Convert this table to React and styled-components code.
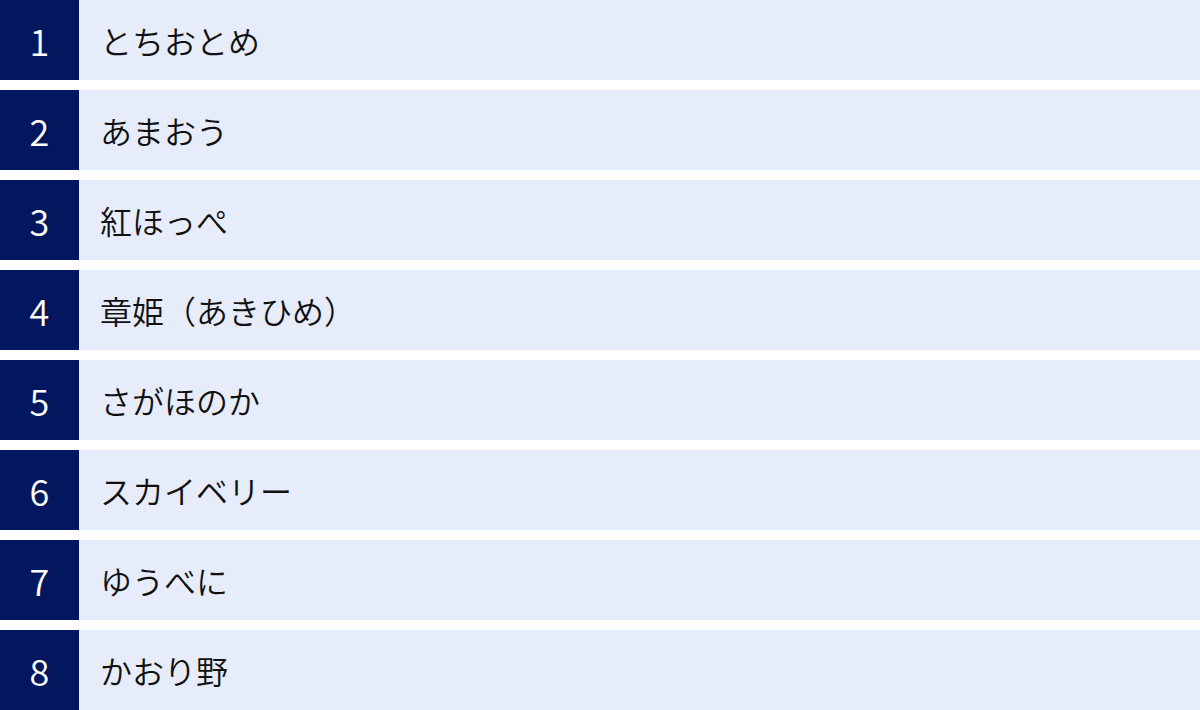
import React from 'react';
import styled, { createGlobalStyle } from 'styled-components';

const GlobalStyle = createGlobalStyle`
  html, body {
    margin: 0;
    padding: 0;
    background: #fff;
  }
`;

const List = styled.div`
  display: flex;
  flex-direction: column;
  gap: 10px;
  width: 1200px;
  font-family: "Noto Sans CJK JP", "Noto Sans", sans-serif;
`;

const Row = styled.div`
  display: flex;
  height: 80px;
  background: #e6ecf9;
`;

const Num = styled.div`
  width: 79px;
  flex-shrink: 0;
  display: flex;
  align-items: center;
  justify-content: center;
  background: #03175f;
  color: #fff;
  font-size: 36px;
  font-weight: 350;
`;

const Label = styled.div`
  display: flex;
  align-items: center;
  padding-left: 21px;
  color: #111;
  font-size: 32px;
  font-weight: 350;
`;

const items = [
  'とちおとめ',
  'あまおう',
  '紅ほっぺ',
  '章姫（あきひめ）',
  'さがほのか',
  'スカイベリー',
  'ゆうべに',
  'かおり野',
];

export default function App() {
  return (
    <>
      <GlobalStyle />
      <List>
        {items.map((name, i) => (
          <Row key={name}>
            <Num>{i + 1}</Num>
            <Label>{name}</Label>
          </Row>
        ))}
      </List>
    </>
  );
}
